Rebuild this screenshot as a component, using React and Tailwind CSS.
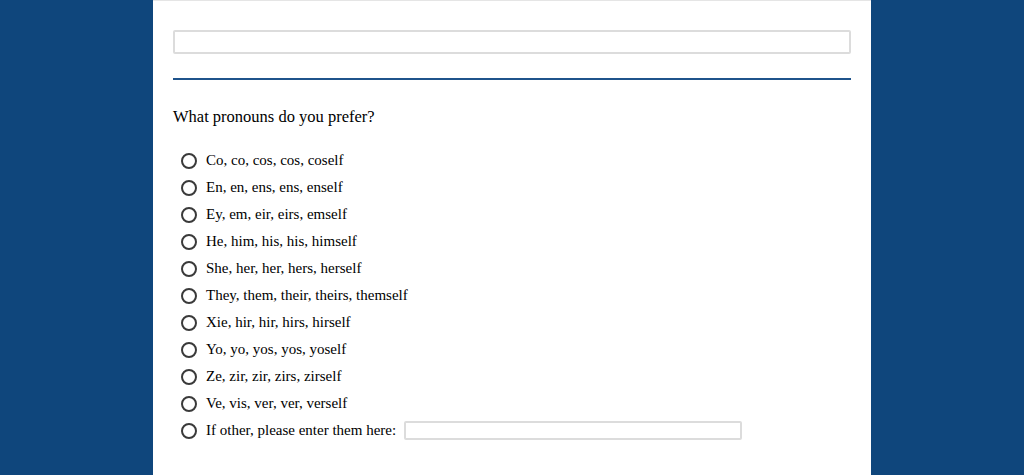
const options = [
  'Co, co, cos, cos, coself',
  'En, en, ens, ens, enself',
  'Ey, em, eir, eirs, emself',
  'He, him, his, his, himself',
  'She, her, her, hers, herself',
  'They, them, their, theirs, themself',
  'Xie, hir, hir, hirs, hirself',
  'Yo, yo, yos, yos, yoself',
  'Ze, zir, zir, zirs, zirself',
  'Ve, vis, ver, ver, verself',
];

function Radio() {
  return <span className="block h-4 w-4 shrink-0 rounded-full border-2 border-[#3a3a3a]" />;
}

export default function App() {
  return (
    <div className="h-[475px] overflow-hidden bg-[#0f467c] font-['Liberation_Serif',serif] text-black">
      <div className="mx-auto h-full w-[718px] border-t border-[#e5e5e5] bg-white px-5 pt-[29px]">
        <div className="h-6 rounded-[2px] border-2 border-[#dcdcdc]" />
        <div className="mt-6 border-t-2 border-[#1f538b]" />
        <p className="mt-[28px] text-[16.5px] leading-[18px]">What pronouns do you prefer?</p>
        <ul className="mt-[21px] flex flex-col pl-2">
          {options.map((o) => (
            <li key={o} className="flex h-[27px] items-center gap-[9px] text-[15px]">
              <Radio />
              <span>{o}</span>
            </li>
          ))}
          <li className="flex h-[27px] items-center gap-[9px] text-[15px]">
            <Radio />
            <span>If other, please enter them here:</span>
            <span className="-ml-[1px] block h-[19px] w-[338px] rounded-[2px] border-2 border-[#dcdcdc]" />
          </li>
        </ul>
      </div>
    </div>
  );
}
